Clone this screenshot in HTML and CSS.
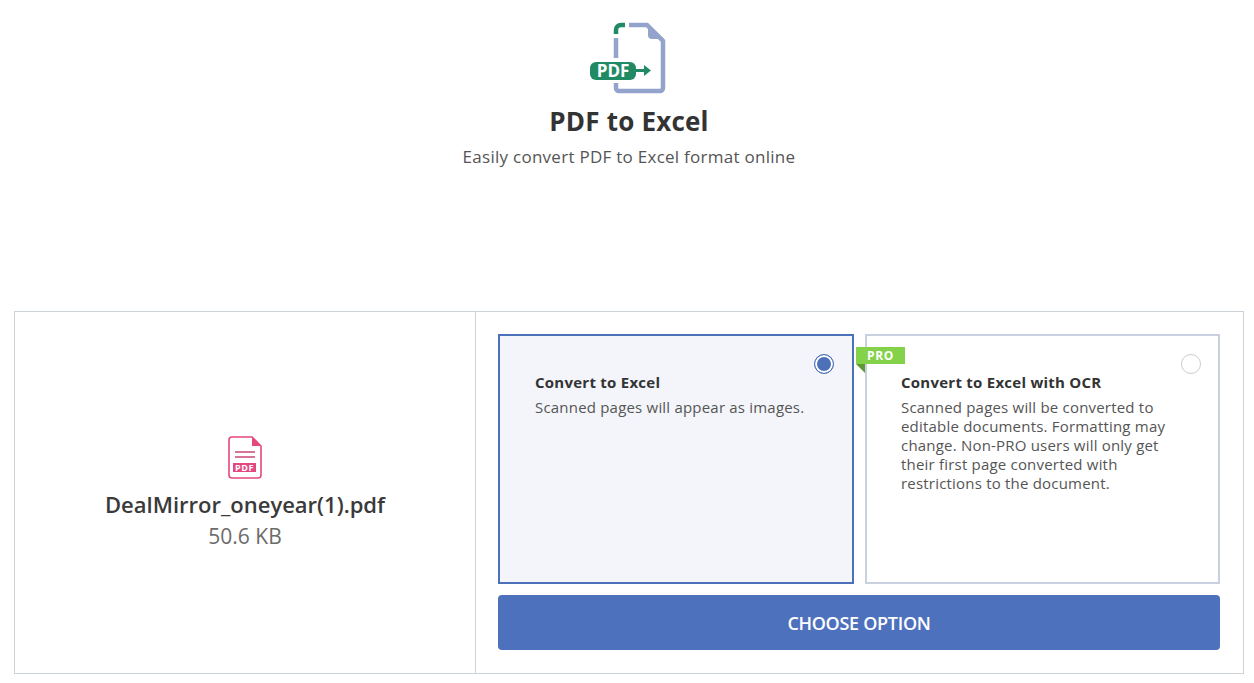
FILE: index.html
```html
<!DOCTYPE html>
<html lang="en">
<head>
<meta charset="utf-8">
<title>PDF to Excel</title>
<link rel="stylesheet" href="styles.css">
</head>
<body>
<header class="hero">
  <svg class="hero-icon" width="78" height="72" viewBox="0 0 78 72" aria-hidden="true">
    <path d="M39 3H57L73 19V66a3 3 0 0 1-3 3H29a3 3 0 0 1-3-3V61" fill="none" stroke="#94a3cb" stroke-width="4.500"/>
    <path d="M58 2V13a4 4 0 0 0 4 4H74Z" fill="#94a3cb"/>
    <path d="M26 36V16" stroke="#94a3cb" stroke-width="4.500" fill="none"/>
    <path d="M26 12V8a5 5 0 0 1 5-5H35" stroke="#1f8a63" stroke-width="4.500" fill="none"/>
    <rect x="0" y="40" width="46" height="18" rx="6" fill="#1f8a63"/>
    <path d="M46 48.500H56" stroke="#1f8a63" stroke-width="3"/>
    <path d="M54 43L61 48.500L54 54Z" fill="#1f8a63"/>
    <text x="23" y="55" class="hero-icon-text" text-anchor="middle">PDF</text>
  </svg>
  <h1 class="title">PDF to Excel</h1>
  <p class="subtitle">Easily convert PDF to Excel format online</p>
</header>
<main class="panel">
  <section class="file">
    <svg class="file-icon" width="34" height="45" viewBox="0 0 34 45" aria-hidden="true">
      <path d="M4 1H24L33 10V39a3 3 0 0 1-3 3H4a3 3 0 0 1-3-3V4a3 3 0 0 1 3-3Z" fill="#fff" stroke="#e5477f" stroke-width="1.600"/>
      <path d="M24 1V10H33Z" fill="#e5477f"/>
      <path d="M7 16H27M7 21H27" stroke="#c9487a" stroke-width="1.600"/>
      <rect x="5" y="27" width="23" height="9" fill="#e5477f"/>
      <text x="16.500" y="35" class="file-icon-text" text-anchor="middle">PDF</text>
    </svg>
    <div class="file-name">DealMirror_oneyear(1).pdf</div>
    <div class="file-size">50.6 KB</div>
  </section>
  <section class="choices">
    <div class="options">
      <div class="option option-active">
        <span class="radio radio-on"></span>
        <h2 class="option-title">Convert to Excel</h2>
        <p class="option-text">Scanned pages will appear as images.</p>
      </div>
      <div class="option">
        <span class="pro">PRO</span>
        <span class="radio"></span>
        <h2 class="option-title">Convert to Excel with OCR</h2>
        <p class="option-text">Scanned pages will be converted to editable documents. Formatting may change. Non-PRO users will only get their first page converted with restrictions to the document.</p>
      </div>
    </div>
    <button class="choose" type="button">CHOOSE OPTION</button>
  </section>
</main>
</body>
</html>
```
FILE: styles.css
```css
* { box-sizing: border-box; }
html, body { height: 100%; }
body {
  margin: 0;
  padding: 0 10px 10px 14px;
  background: #fff;
  color: #333;
  font-family: "Open Sans", "Noto Sans", sans-serif;
  overflow: hidden;
}
.hero {
  height: 311px;
  padding-top: 22px;
  display: flex;
  flex-direction: column;
  align-items: center;
}
.hero-icon { display: block; }
.hero-icon-text {
  font: 700 17px "Open Sans", sans-serif;
  fill: #fff;
}
.title {
  margin: 9px 0 0;
  font-size: 26px;
  line-height: 36px;
  font-weight: 700;
  letter-spacing: 0.2px;
  color: #333;
}
.subtitle {
  margin: 7px 0 0;
  font-size: 17px;
  line-height: 22px;
  letter-spacing: 0.27px;
  color: #555;
}
.panel {
  height: 363px;
  border: 1px solid #ccd3d8;
  display: flex;
}
.file {
  width: 461px;
  flex: none;
  border-right: 1px solid #ccd3d8;
  display: flex;
  flex-direction: column;
  align-items: center;
  padding-top: 124px;
}
.file-icon { display: block; }
.file-icon-text {
  font: 700 9px "Open Sans", sans-serif;
  fill: #fff;
  letter-spacing: 0.6px;
}
.file-name {
  margin-top: 8px;
  font-size: 22px;
  line-height: 30px;
  font-weight: 600;
  color: #3a3a3a;
}
.file-size {
  margin-top: 2px;
  font-size: 21px;
  line-height: 30px;
  color: #6b6b6b;
}
.choices {
  flex: 1;
  padding: 22px 23px 22px 22px;
  display: flex;
  flex-direction: column;
  gap: 11px;
}
.options {
  display: flex;
  gap: 11px;
  height: 250px;
}
.option {
  position: relative;
  flex: 1;
  border: 2px solid #c9d1e0;
  padding: 37px 34px 0;
  background: #fff;
}
.option-active {
  flex: 0 0 356px;
  padding-left: 35px;
  border-color: #4d71b8;
  background: #f3f5fa;
}
.option-title {
  margin: 0;
  font-size: 15px;
  line-height: 19px;
  font-weight: 700;
  letter-spacing: 0.25px;
  color: #333;
}
.option-text {
  margin: 6px 0 0;
  font-size: 15px;
  line-height: 19px;
  letter-spacing: 0.2px;
  color: #555;
}
.radio {
  position: absolute;
  top: 18px;
  right: 17px;
  width: 20px;
  height: 20px;
  border: 1px solid #ccc;
  border-radius: 50%;
  background: #fff;
}
.radio-on {
  right: 18px;
  border-color: #4d71b8;
  box-shadow: inset 0 0 0 2px #fff;
  background: #4d71b8;
}
.pro {
  position: absolute;
  top: 11px;
  left: -11px;
  width: 49px;
  height: 17px;
  padding-left: 11px;
  background: #83d24a;
  color: #fff;
  font-size: 12px;
  line-height: 17px;
  font-weight: 700;
  letter-spacing: 0.6px;
}
.pro::after {
  content: "";
  position: absolute;
  top: 17px;
  left: 0;
  border-top: 9px solid #5d9a34;
  border-left: 9px solid transparent;
}
.choose {
  height: 55px;
  border: 0;
  border-radius: 4px;
  background: #4d71bd;
  color: #fff;
  font-family: inherit;
  font-size: 18px;
  font-weight: 600;
  letter-spacing: -0.3px;
}
```
